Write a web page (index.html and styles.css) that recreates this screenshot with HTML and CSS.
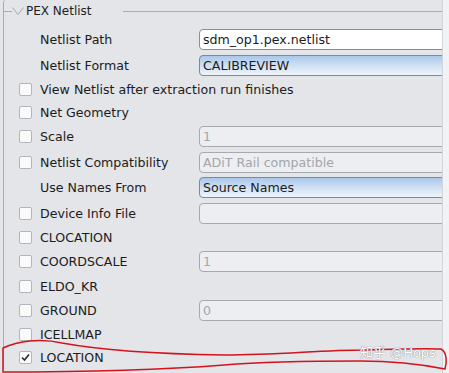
FILE: index.html
```html
<!DOCTYPE html>
<html lang="en">
<head>
    <meta charset="UTF-8">
    <meta name="viewport" content="width=device-width, initial-scale=1.0">
    <title>PEX Netlist</title>
    <link rel="stylesheet" href="styles.css">
</head>
<body>
    <div class="panel">
        <div class="group">
            <div class="group-head">
                <span class="head-line short"></span>
                <svg class="arrow" width="12" height="10" viewBox="0 0 12 10">
                    <path d="M0.5 1.5 L6 8.5 L11.5 1.5" fill="none" stroke="#a3a7ac" stroke-width="1"/>
                </svg>
                <span class="title">PEX Netlist</span>
                <span class="head-line long"></span>
            </div>
            <div class="group-body">
                <div class="row tall">
                    <span class="box-slot"></span>
                    <span class="label">Netlist Path</span>
                    <span class="field">sdm_op1.pex.netlist</span>
                </div>
                <div class="row tall">
                    <span class="box-slot"></span>
                    <span class="label">Netlist Format</span>
                    <span class="field combo">CALIBREVIEW</span>
                </div>
                <div class="row">
                    <span class="box-slot"><span class="check"></span></span>
                    <span class="label wide">View Netlist after extraction run finishes</span>
                </div>
                <div class="row">
                    <span class="box-slot"><span class="check"></span></span>
                    <span class="label">Net Geometry</span>
                </div>
                <div class="row tall">
                    <span class="box-slot"><span class="check"></span></span>
                    <span class="label">Scale</span>
                    <span class="field disabled">1</span>
                </div>
                <div class="row tall">
                    <span class="box-slot"><span class="check"></span></span>
                    <span class="label">Netlist Compatibility</span>
                    <span class="field disabled">ADiT Rail compatible</span>
                </div>
                <div class="row tall">
                    <span class="box-slot"></span>
                    <span class="label">Use Names From</span>
                    <span class="field combo">Source Names</span>
                </div>
                <div class="row tall">
                    <span class="box-slot"><span class="check"></span></span>
                    <span class="label">Device Info File</span>
                    <span class="field disabled"></span>
                </div>
                <div class="row">
                    <span class="box-slot"><span class="check"></span></span>
                    <span class="label">CLOCATION</span>
                </div>
                <div class="row tall">
                    <span class="box-slot"><span class="check"></span></span>
                    <span class="label">COORDSCALE</span>
                    <span class="field disabled">1</span>
                </div>
                <div class="row">
                    <span class="box-slot"><span class="check"></span></span>
                    <span class="label">ELDO_KR</span>
                </div>
                <div class="row tall">
                    <span class="box-slot"><span class="check"></span></span>
                    <span class="label">GROUND</span>
                    <span class="field disabled">0</span>
                </div>
                <div class="row">
                    <span class="box-slot"><span class="check"></span></span>
                    <span class="label">ICELLMAP</span>
                </div>
                <div class="row">
                    <span class="box-slot">
                        <span class="check checked">
                            <svg width="11" height="11" viewBox="0 0 11 11">
                                <path d="M2 5.5 L4.5 8 L9 2.5" fill="none" stroke="#2a2a2a" stroke-width="1.6"/>
                            </svg>
                        </span>
                    </span>
                    <span class="label">LOCATION</span>
                </div>
            </div>
        </div>
    </div>

    <svg class="ink" width="449" height="373" viewBox="0 0 449 373">
        <path d="M3 372 L3 348 C18 341 40 338 62 343 C100 350 160 354 224 355 C280 355 320 350 364 350 C400 349 425 348 441 349 C447 352 447 362 445 369 C420 364 390 361 360 361 C310 361 260 362 224 365 C160 370 80 372 3 372 Z"
              fill="none" stroke="#d4121c" stroke-width="1.5"/>
    </svg>
    <div class="watermark">知乎 @Hops</div>
</body>
</html>
```

FILE: styles.css
```css
html, body {
    margin: 0;
    padding: 0;
}

body {
    width: 449px;
    height: 373px;
    overflow: hidden;
    background-color: #f1f2f4;
    font-family: "DejaVu Sans", "Noto Sans CJK SC", sans-serif;
    font-size: 12.6px;
    color: #1c1c1c;
    position: relative;
}

.panel {
    width: 442px;
    height: 373px;
    overflow: hidden;
    background-color: #e3e5e9;
    border-right: 1px solid #d2d5d9;
}

.group {
    margin: 11px 0 0 3px;
    border-left: 1px solid #a9adb2;
    border-top-left-radius: 3px;
}

.group-head {
    display: flex;
    align-items: center;
    height: 22px;
    margin-top: -11px;
}

.head-line {
    height: 1px;
    background-color: #a9adb2;
}

.head-line.short {
    width: 8px;
}

.head-line.long {
    flex: 1;
    margin-left: 31px;
}

.arrow {
    display: block;
    flex-shrink: 0;
}

.title {
    margin-left: 2px;
    font-size: 12px;
    color: #1e1e1e;
}

.group-body {
    padding-top: 5px;
}

.row {
    display: flex;
    align-items: center;
    height: 23px;
}

.row.tall {
    height: 25.5px;
}

.box-slot {
    display: flex;
    align-items: center;
    flex-shrink: 0;
    width: 21px;
    margin-left: 15px;
}

.check {
    display: flex;
    justify-content: center;
    align-items: center;
    width: 11px;
    height: 11px;
    border: 1px solid #b2b5b9;
    border-radius: 2px;
    background-color: #fafafa;
}

.label {
    width: 159px;
    flex-shrink: 0;
    white-space: nowrap;
}

.label.wide {
    width: auto;
}

.field {
    box-sizing: border-box;
    width: 260px;
    height: 21px;
    flex-shrink: 0;
    display: flex;
    align-items: center;
    padding-left: 3px;
    border: 1px solid #8a8d91;
    border-radius: 4px;
    background-color: #ffffff;
    white-space: nowrap;
}

.field.combo {
    border-color: #7e8a97;
    background: linear-gradient(to bottom, #a9c8ea, #d3e2f3 55%, #eef4fa);
}

.field.disabled {
    border-color: #a6a9ad;
    background-color: #eceef1;
    color: #a3a6aa;
}

.ink {
    position: absolute;
    top: 0;
    left: 0;
    pointer-events: none;
}

.watermark {
    position: absolute;
    left: 360px;
    top: 342px;
    font-size: 13px;
    color: #ffffff;
    text-shadow: 0 0 1px #8d8d8d, 0 0 1px #8d8d8d;
    white-space: nowrap;
}
```
